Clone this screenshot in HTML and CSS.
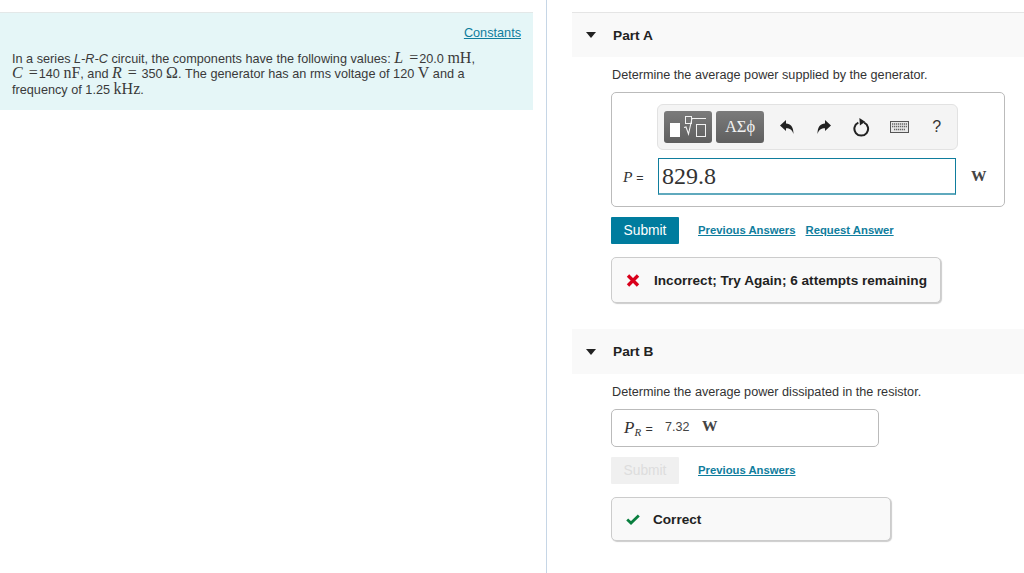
FILE: index.html
```html
<!DOCTYPE html>
<html lang="en">
<head>
<meta charset="utf-8">
<title>Series L-R-C circuit</title>
<link rel="stylesheet" href="styles.css">
</head>
<body>
<div class="page">
  <section class="left">
    <div class="intro">
      <div class="constants"><a href="#">Constants</a></div>
      <p class="problem">In a series <i>L-R-C</i> circuit, the components have the following values: <span class="m"><i>L</i> <span class="eq">=</span></span>20.0 <span class="m">mH</span>,<br>
      <span class="m"><i>C</i> <span class="eq">=</span></span>140 <span class="m">nF</span>, and <span class="m"><i>R</i> <span class="eq">=</span></span> 350 <span class="m">Ω</span>. The generator has an rms voltage of 120 <span class="m">V</span> and a<br>
      frequency of 1.25 <span class="m">kHz</span>.</p>
    </div>
  </section>
  <div class="divider"></div>
  <section class="right">
    <div class="part-head first"><span class="caret"></span><span>Part A</span></div>
    <div class="part-body">
      <p class="question">Determine the average power supplied by the generator.</p>
      <div class="answer-box">
        <div class="toolbar">
          <div class="tool-btn tpl">
            <svg width="38" height="26" viewBox="0 0 38 26" aria-hidden="true">
              <rect x="1" y="9" width="10" height="14" fill="#fff"/>
              <rect x="16.500" y="2.500" width="6" height="7" fill="none" stroke="#f2f2f2"/>
              <path d="M15 13.500l2 -.5L19.500 20L23 4.500H37" fill="none" stroke="#f2f2f2" stroke-width="1.100"/>
              <rect x="27.500" y="10.500" width="9" height="12" fill="none" stroke="#f2f2f2"/>
            </svg>
          </div>
          <div class="tool-btn sym">ΑΣϕ</div>
          <div class="tool-icons">
            <svg width="14" height="16" viewBox="0 0 14 16" aria-hidden="true"><path d="M0 6.500L6 1v3.400c4.500 .2 7.500 3.200 7.500 10.600c-1.500-4.400-3.500-5.600-7.500-5.700V12z" fill="#222"/></svg>
            <svg width="14" height="16" viewBox="0 0 14 16" aria-hidden="true"><path d="M14 6.500L8 1v3.400C3.500 4.600 .5 7.600 .5 15C2 10.600 4 9.400 8 9.300V12z" fill="#222"/></svg>
            <svg width="17" height="19" viewBox="0 0 16 18" aria-hidden="true"><path d="M5 4.300a6.500 6.500 0 1 0 5.500 0" fill="none" stroke="#222" stroke-width="1.900"/><path d="M6 0l5.500 3.600L6.500 7z" fill="#222"/></svg>
            <svg width="19" height="12" viewBox="0 0 19 12" aria-hidden="true"><rect x=".5" y=".5" width="18" height="11" fill="#e8e8e8" stroke="#555"/><path d="M2 3h15M2 5.500h15M4 8.500h11" stroke="#666" stroke-width="1.300" stroke-dasharray="1.300 .7"/></svg>
            <span class="help">?</span>
          </div>
        </div>
        <div class="answer-row">
          <span class="var"><i>P</i> <small>=</small></span>
          <div class="field">829.8</div>
          <span class="unit">W</span>
        </div>
      </div>
      <div class="actions">
        <button class="submit" type="button">Submit</button>
        <a href="#">Previous Answers</a>
        <a href="#">Request Answer</a>
      </div>
      <div class="feedback wrong">
        <svg width="14" height="13" viewBox="0 0 14 13" aria-hidden="true"><path d="M2 1.500L12 11.500M12 1.500L2 11.500" stroke="#d9001b" stroke-width="3.400"/></svg>
        <span>Incorrect; Try Again; 6 attempts remaining</span>
      </div>
    </div>
    <div class="part-head second"><span class="caret"></span><span>Part B</span></div>
    <div class="part-body">
      <p class="question">Determine the average power dissipated in the resistor.</p>
      <div class="result-box">
        <span class="var big"><i>P<sub>R</sub></i> <small>=</small></span>
        <span class="val">7.32</span>
        <span class="unit">W</span>
      </div>
      <div class="actions lower">
        <button class="submit off" type="button" disabled>Submit</button>
        <a href="#">Previous Answers</a>
      </div>
      <div class="feedback right-answer">
        <svg width="14" height="11" viewBox="0 0 14 11" aria-hidden="true"><path d="M1.200 5.500L5 9L12.800 1.500" fill="none" stroke="#0a7f3f" stroke-width="2.800"/></svg>
        <span>Correct</span>
      </div>
    </div>
  </section>
</div>
</body>
</html>
```
FILE: styles.css
```css
* { box-sizing: border-box; }
html, body { margin: 0; height: 573px; overflow: hidden; background: #fff; }
body { font-family: "Liberation Sans", Arial, sans-serif; color: #333; font-size: 12px; }
.page { display: flex; height: 573px; }
.left { width: 533px; padding-top: 12px; flex: none; }
.intro { height: 98px; background: #e5f6f7; border-top: 1px solid #e3e8e8; padding: 12px 12px 0 12px; }
.constants { text-align: right; line-height: 16px; height: 27px; font-size: 12.700px; }
a { color: #0f7d9d; text-decoration: underline; }
.problem { margin: 0; font-size: 12.700px; line-height: 15.300px; color: #3a3a3a; }
.m { font-family: "Liberation Serif", serif; font-size: 16px; line-height: 0; word-spacing: 1px; }
.eq { margin: 0 1px; }
.divider { width: 1px; margin-left: 13px; background: #c6d6e6; flex: none; }
.right { flex: 1; margin-left: 25px; padding-top: 12px; min-width: 0; }
.part-head { display: flex; align-items: center; height: 45px; background: #f9f9f9; font-weight: bold; font-size: 13.700px; color: #222; padding-left: 14px; gap: 17px; }
.part-head.first { border-top: 1px solid #e5e5e5; }
.caret { width: 0; height: 0; border-left: 5px solid transparent; border-right: 5px solid transparent; border-top: 6px solid #222; }
.part-body { padding-left: 39px; }
.question { margin: 0; font-size: 12.650px; line-height: 14px; color: #333; padding: 11px 0 0 1px; }
.answer-box { width: 394px; height: 115px; margin-top: 10px; border: 1px solid #bbb; border-radius: 5px; padding-top: 11px; }
.toolbar { display: flex; align-items: center; width: 301px; height: 46px; margin-left: 45px; background: #f4f4f4; border: 1px solid #e2e2e2; border-radius: 6px; padding-left: 6px; gap: 4px; }
.tool-btn { height: 32px; background: linear-gradient(#7b7b7b, #5f5f5f); border-radius: 3px; color: #f2f2f2; display: flex; align-items: center; justify-content: center; }
.tpl { width: 48px; }
.sym { width: 48px; font-family: "Liberation Serif", serif; font-size: 16.500px; }
.tool-icons { display: grid; grid-template-columns: repeat(5, 37.500px); align-items: center; justify-items: center; }
.help { font-size: 16px; color: #333; }
.answer-row { display: flex; align-items: center; margin-top: 8px; padding-left: 11px; }
.var { font-family: "Liberation Serif", serif; font-size: 15.500px; color: #333; width: 35px; }
.var small { font-family: "Liberation Sans", sans-serif; font-size: 12.500px; }
.field { width: 298px; height: 37px; border: 1px solid #0f7d9d; border-bottom: 2px solid #5fa9bd; font-family: "Liberation Serif", serif; font-size: 24px; line-height: 34px; padding-left: 3px; color: #333; }
.unit { font-family: "Liberation Serif", serif; font-weight: bold; font-size: 15.500px; color: #444; }
.answer-row .unit { margin-left: 15px; position: relative; top: -1px; }
.actions { display: flex; align-items: center; gap: 10px; margin-top: 10px; font-weight: bold; font-size: 11.300px; height: 27px; }
.actions a:first-of-type { margin-left: 9px; }
.actions a { position: relative; top: -1px; }
.submit { width: 68px; height: 27px; background: #007c9e; color: #fff; border: 0; border-radius: 1px; font: 13.800px "Liberation Sans", Arial, sans-serif; padding: 0; }
.submit.off { background: #f0f0f0; color: #ddd; }
.feedback { display: flex; align-items: center; height: 46px; margin-top: 13px; border: 1px solid #ccc; border-radius: 5px; background: #f9f9f9; box-shadow: 1px 1px 1px #ccc; font-weight: bold; font-size: 13.600px; color: #222; padding-left: 14px; }
.wrong { width: 330px; gap: 14px; }
.right-answer { width: 280px; height: 44px; margin-top: 13px; gap: 13px; }
.second { margin-top: 26px; }
.result-box { display: flex; align-items: center; width: 268px; height: 38px; margin-top: 10px; border: 1px solid #bbb; border-radius: 5px; padding-left: 12px; }
.var.big { font-size: 17px; width: 41px; }
.var sub { font-size: 11px; vertical-align: -3px; line-height: 0; }
.val { font-size: 12.500px; color: #444; width: 37px; position: relative; top: -1px; }
.result-box .unit { position: relative; top: -2px; }
.lower { margin-top: 10px; }
```
